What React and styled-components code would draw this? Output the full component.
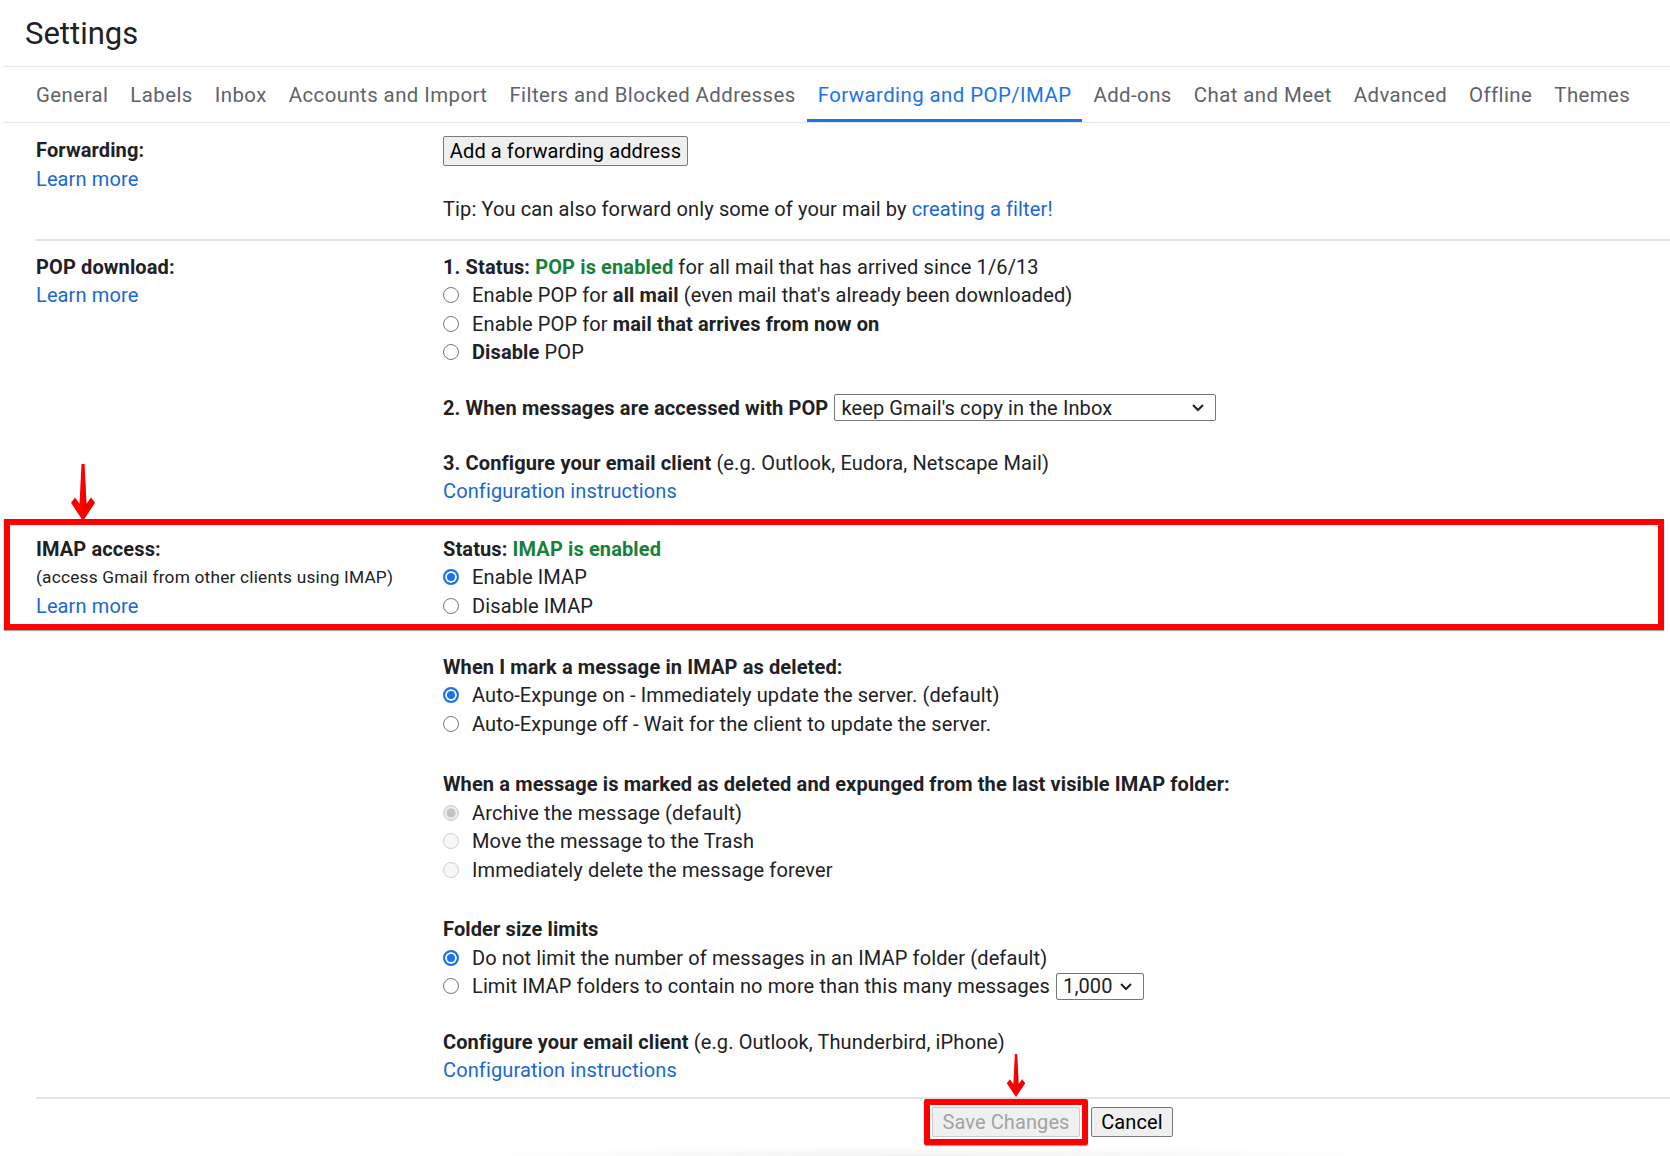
import React from 'react';
import styled, { createGlobalStyle } from 'styled-components';

const GlobalStyle = createGlobalStyle`
  html, body {
    margin: 0;
    padding: 0;
    background: #fff;
  }
  body {
    font-family: Roboto, "Noto Sans", "Liberation Sans", sans-serif;
    color: #202124;
    overflow: hidden;
  }
`;

const TABS = [
  'General',
  'Labels',
  'Inbox',
  'Accounts and Import',
  'Filters and Blocked Addresses',
  'Forwarding and POP/IMAP',
  'Add-ons',
  'Chat and Meet',
  'Advanced',
  'Offline',
  'Themes',
];

const Arrow = ({ className }) => (
  <svg className={className} viewBox="0 0 26 56" preserveAspectRatio="none">
    <polygon
      points="11.5,0 14.5,0 16.5,39 21,33 25,38 13,56 1,38 5,33 9.5,39"
      fill="#f00"
    />
    <polygon points="13,0 14.5,0 16.5,39 21,33 25,38 13,56" fill="#d40000" opacity="0.3" />
  </svg>
);

const Chevron = () => (
  <svg width="14" height="9" viewBox="0 0 14 9">
    <path d="M2 2l5 5 5-5" fill="none" stroke="#202124" strokeWidth="2" />
  </svg>
);

const Radio = ({ checked, disabled, children }) => (
  <RadioRow>
    <RadioMark $checked={checked} $disabled={disabled} />
    <RadioText>{children}</RadioText>
  </RadioRow>
);

const App = () => (
  <>
    <GlobalStyle />
    <Page>
      <Title>Settings</Title>
      <TabBar>
        {TABS.map((t) => (
          <Tab key={t} $active={t === 'Forwarding and POP/IMAP'}>
            {t}
          </Tab>
        ))}
      </TabBar>

      <Section $pt={13} $pb={16} $divider>
        <LabelCol>
          <Label>Forwarding:</Label>
          <Link>Learn more</Link>
        </LabelCol>
        <Body>
          <Button $width={245}>Add a forwarding address</Button>
          <Block $gap={28.5}>
            <Line>
              Tip: You can also forward only some of your mail by&nbsp;
              <Link as="span">creating a filter!</Link>
            </Line>
          </Block>
        </Body>
      </Section>

      <Section $pt={11.5} $pb={13}>
        <LabelCol>
          <Label>POP download:</Label>
          <Link>Learn more</Link>
        </LabelCol>
        <Body>
          <Line>
            <b>1. Status:&nbsp;</b>
            <Good>POP is enabled</Good>&nbsp;for all mail that has arrived since 1/6/13
          </Line>
          <Radio>
            Enable POP for&nbsp;<b>all mail</b>&nbsp;(even mail that's already been downloaded)
          </Radio>
          <Radio>
            Enable POP for&nbsp;<b>mail that arrives from now on</b>
          </Radio>
          <Radio>
            <b>Disable</b>&nbsp;POP
          </Radio>
          <Block $gap={27}>
            <Line>
              <b>2. When messages are accessed with POP</b>
              <SelectBox $width={382}>
                <span>keep Gmail's copy in the Inbox</span>
                <Chevron />
              </SelectBox>
            </Line>
          </Block>
          <Block $gap={26.5}>
            <Line>
              <b>3. Configure your email client</b>&nbsp;(e.g. Outlook, Eudora, Netscape Mail)
            </Line>
            <Line>
              <Link as="span">Configuration instructions</Link>
            </Line>
          </Block>
        </Body>
      </Section>

      <Highlight>
        <LeftArrow />
        <HighlightRow>
          <LabelCol>
            <Label>IMAP access:</Label>
            <Note>(access Gmail from other clients using IMAP)</Note>
            <Link>Learn more</Link>
          </LabelCol>
          <Body>
            <Line>
              <b>Status:&nbsp;</b>
              <Good>IMAP is enabled</Good>
            </Line>
            <Radio checked>Enable IMAP</Radio>
            <Radio>Disable IMAP</Radio>
          </Body>
        </HighlightRow>
      </Highlight>

      <Section $pt={22.5} $pb={12} $divider>
        <LabelCol />
        <Body>
          <Line>
            <b>When I mark a message in IMAP as deleted:</b>
          </Line>
          <Radio checked>Auto-Expunge on - Immediately update the server. (default)</Radio>
          <Radio>Auto-Expunge off - Wait for the client to update the server.</Radio>

          <Block $gap={32}>
            <Line>
              <b>When a message is marked as deleted and expunged from the last visible IMAP folder:</b>
            </Line>
            <Radio checked disabled>
              Archive the message (default)
            </Radio>
            <Radio disabled>Move the message to the Trash</Radio>
            <Radio disabled>Immediately delete the message forever</Radio>
          </Block>

          <Block $gap={31}>
            <Line>
              <b>Folder size limits</b>
            </Line>
            <Radio checked>Do not limit the number of messages in an IMAP folder (default)</Radio>
            <Radio>
              Limit IMAP folders to contain no more than this many messages
              <SelectBox $width={88}>
                <span>1,000</span>
                <Chevron />
              </SelectBox>
            </Radio>
          </Block>

          <Block $gap={27}>
            <Line>
              <b>Configure your email client</b>&nbsp;(e.g. Outlook, Thunderbird, iPhone)
            </Line>
            <Line>
              <Link as="span">Configuration instructions</Link>
            </Line>
          </Block>
        </Body>
      </Section>

      <ButtonBar>
        <SaveFrame>
          <SaveArrow />
          <Button $width={148} disabled>
            Save Changes
          </Button>
        </SaveFrame>
        <Button $width={82}>Cancel</Button>
      </ButtonBar>
      <BottomShade />
    </Page>
  </>
);

const Page = styled.div`
  width: 1670px;
  height: 1156px;
  overflow: hidden;
  display: flex;
  flex-direction: column;
`;

const Title = styled.h1`
  margin: 0 0 0 3px;
  height: 66px;
  line-height: 68px;
  padding-left: 22px;
  font-size: 31px;
  font-weight: 400;
  color: #202124;
  border-bottom: 1px solid #e6e8eb;
`;

const TabBar = styled.nav`
  display: flex;
  height: 55px;
  margin-left: 3px;
  padding-left: 22px;
  border-bottom: 1px solid #e6e8eb;
`;

const Tab = styled.div`
  display: flex;
  align-items: center;
  padding: 0 11px;
  font-size: 20.4px;
  letter-spacing: 0.43px;
  color: ${({ $active }) => ($active ? '#1a73e8' : '#5f6368')};
  box-shadow: ${({ $active }) => ($active ? 'inset 0 -3px 0 #1a73e8' : 'none')};
  white-space: nowrap;
`;

const Section = styled.section`
  display: grid;
  grid-template-columns: 407px 1fr;
  margin-left: 36px;
  padding-top: ${({ $pt }) => $pt}px;
  padding-bottom: ${({ $pb }) => $pb}px;
  border-bottom: ${({ $divider }) => ($divider ? '2px solid #e3e3e3' : 'none')};
  font-size: 20px;
  line-height: 28.5px;
  letter-spacing: 0.12px;
`;

const LabelCol = styled.div`
  display: flex;
  flex-direction: column;
  align-items: flex-start;
`;

const Label = styled.div`
  font-weight: 700;
  line-height: 28.5px;
`;

const Note = styled.div`
  font-size: 17.3px;
  letter-spacing: 0.2px;
  line-height: 28.5px;
`;

const Link = styled.a`
  color: #1a67d2;
  line-height: 28.5px;
  cursor: pointer;
`;

const Body = styled.div`
  display: flex;
  flex-direction: column;
  align-items: flex-start;
  font-size: 20px;
`;

const Block = styled.div`
  display: flex;
  flex-direction: column;
  align-items: flex-start;
  margin-top: ${({ $gap }) => $gap}px;
`;

const Line = styled.div`
  display: flex;
  align-items: center;
  height: 28.5px;
  white-space: pre;

  b {
    font-weight: 700;
  }
`;

const Good = styled.b`
  color: #188038;
`;

const RadioRow = styled.div`
  display: flex;
  align-items: center;
  height: 28.5px;
  white-space: pre;

  b {
    font-weight: 700;
  }
`;

const RadioText = styled.span`
  display: flex;
  align-items: center;
`;

const RadioMark = styled.span`
  flex: none;
  box-sizing: border-box;
  width: 16px;
  height: 16px;
  margin-right: 13px;
  border-radius: 50%;
  border: ${({ $checked, $disabled }) =>
    $disabled
      ? '1.5px solid #cfcfcf'
      : $checked
      ? '2px solid #1a73e8'
      : '1.5px solid #767676'};
  background: ${({ $checked, $disabled }) =>
    $disabled ? ($checked ? '#c2c2c2' : '#f7f7f7') : $checked ? '#1a73e8' : '#fff'};
  box-shadow: ${({ $checked, $disabled }) =>
    $checked ? `inset 0 0 0 ${$disabled ? 2.5 : 2}px ${$disabled ? '#ececec' : '#fff'}` : 'none'};
`;

const Button = styled.button`
  box-sizing: border-box;
  width: ${({ $width }) => $width}px;
  height: 30px;
  padding: 0;
  border: 1px solid ${({ disabled }) => (disabled ? '#c9c9c9' : '#7a7a7a')};
  border-radius: 2px;
  background: ${({ disabled }) => (disabled ? '#f0f0f0' : '#efefef')};
  color: ${({ disabled }) => (disabled ? '#a3a3a3' : '#000')};
  font-family: Roboto, "Liberation Sans", sans-serif;
  font-size: 20px;
  letter-spacing: 0.1px;
  line-height: 28px;
  white-space: nowrap;
`;

const SelectBox = styled.div`
  box-sizing: border-box;
  display: flex;
  align-items: center;
  justify-content: space-between;
  width: ${({ $width }) => $width}px;
  height: 27px;
  margin-left: 6px;
  padding: 0 10px 0 6px;
  border: 1px solid #767676;
  border-radius: 2px;
  background: #fff;
  font-size: 20px;
  font-weight: 400;
`;

const Highlight = styled.div`
  position: relative;
  box-sizing: border-box;
  width: 1660px;
  margin-left: 4px;
  border: 6px solid #f00;
  box-shadow: 0 1px 1px rgba(0, 0, 0, 0.35);
`;

const HighlightRow = styled.div`
  display: grid;
  grid-template-columns: 407px 1fr;
  padding: 10px 0 4px 26px;
  font-size: 20px;
  line-height: 28.5px;
  letter-spacing: 0.12px;
`;

const LeftArrow = styled(Arrow)`
  position: absolute;
  left: 60px;
  bottom: calc(100% + 4px);
  width: 26px;
  height: 57px;
`;

const ButtonBar = styled.div`
  display: flex;
  align-items: center;
  gap: 3px;
  padding-left: 924px;
`;

const SaveFrame = styled.div`
  position: relative;
  display: flex;
  padding: 2px;
  border: 6px solid #f00;
  border-radius: 2px;
  box-shadow: 0 1px 1px rgba(0, 0, 0, 0.4);
`;

const SaveArrow = styled(Arrow)`
  position: absolute;
  left: 76px;
  bottom: calc(100% + 8px);
  width: 20px;
  height: 43px;
`;

const BottomShade = styled.div`
  flex: 1;
  margin: 0 265px 0 447px;
  border-radius: 40px 40px 0 0;
  background: radial-gradient(ellipse at 50% 120%, rgba(0, 0, 0, 0.06), rgba(0, 0, 0, 0) 70%);
`;

export default App;
